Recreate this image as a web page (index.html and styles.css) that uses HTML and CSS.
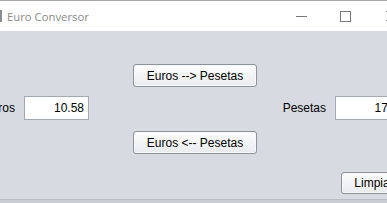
FILE: index.html
```html
<!DOCTYPE html>
<html lang="es">
<head>
    <meta charset="UTF-8">
    <title>Euro Conversor</title>
    <link rel="stylesheet" href="styles.css">
</head>
<body>
    <div class="window">
        <div class="titlebar">
            <span class="app-icon"></span>
            <span class="title">Euro Conversor</span>
            <div class="controls">
                <span class="ctl"><span class="ico-min"></span></span>
                <span class="ctl"><span class="ico-max"></span></span>
                <span class="ctl">
                    <svg width="10" height="10" viewBox="0 0 10 10"><path d="M0 0L10 10M10 0L0 10" stroke="#777" stroke-width="1"/></svg>
                </span>
            </div>
        </div>

        <div class="content">
            <div class="row-top">
                <button class="btn btn-conv">Euros --&gt; Pesetas</button>
            </div>

            <div class="row-fields">
                <label class="lbl">Euros</label>
                <input class="field" type="text" value="10.58">
                <label class="lbl">Pesetas</label>
                <input class="field field-wide" type="text" value="1760.36">
            </div>

            <div class="row-back">
                <button class="btn btn-conv">Euros &lt;-- Pesetas</button>
            </div>

            <div class="row-clear">
                <button class="btn btn-clear">Limpiar</button>
            </div>
        </div>
    </div>
</body>
</html>
```

FILE: styles.css
```css
body {
    margin: 0;
    width: 387px;
    height: 203px;
    overflow: hidden;
    background-color: #c9ccd2;
    font-family: "Liberation Sans", Arial, sans-serif;
}

.window {
    width: 436px;
    height: 199px;
    margin-left: -22px;
    background-color: #d7dae0;
    border-bottom: 1px solid #b9bdc4;
}

/* barra de titulo */
.titlebar {
    display: flex;
    align-items: center;
    height: 30px;
    background-color: #fff;
    border-top: 1px solid #a6a6a6;
}

.app-icon {
    width: 14px;
    height: 12px;
    margin-left: 8px;
    border-right: 2px solid #8c8c8c;
}

.title {
    margin-left: 5px;
    font-family: "Open Sans", sans-serif;
    font-size: 11.3px;
    color: #8a8a8a;
}

.controls {
    display: flex;
    margin-left: auto;
    height: 30px;
}

.ctl {
    display: flex;
    align-items: center;
    justify-content: center;
    width: 46px;
}

.ico-min {
    width: 11px;
    border-top: 1px solid #777;
    margin-left: 4px;
}

.ico-max {
    width: 9px;
    height: 9px;
    border: 1px solid #777;
}

/* contenido */
.content {
    padding-top: 33px;
}

.btn {
    font-family: "Liberation Sans", Arial, sans-serif;
    font-size: 12px;
    color: #000;
    height: 23px;
    padding: 0;
    border: 1px solid #8e939b;
    border-radius: 3px;
    background: linear-gradient(#fdfdfd, #e9ebee);
    box-shadow: inset 0 0 0 1px #f7f8f9;
}

.btn-conv {
    width: 124px;
}

.row-top,
.row-back {
    padding-left: 155px;
}

.row-fields {
    display: grid;
    grid-template-columns: 37px 65px 1fr 79px;
    column-gap: 9px;
    align-items: center;
    margin-top: 9px;
}

.lbl {
    font-size: 12px;
    text-align: right;
    color: #000;
}

.field {
    box-sizing: border-box;
    width: 65px;
    height: 24px;
    padding: 0 4px 0 0;
    border: 1px solid #a3a9b1;
    background-color: #fff;
    font-family: "Liberation Sans", Arial, sans-serif;
    font-size: 12px;
    text-align: right;
    color: #000;
}

.field-wide {
    width: 85px;
    padding-right: 1px;
}

.row-back {
    margin-top: 11px;
}

.row-clear {
    margin-top: 18px;
    padding-left: 363px;
}

.btn-clear {
    width: 66px;
    height: 22px;
}
```
